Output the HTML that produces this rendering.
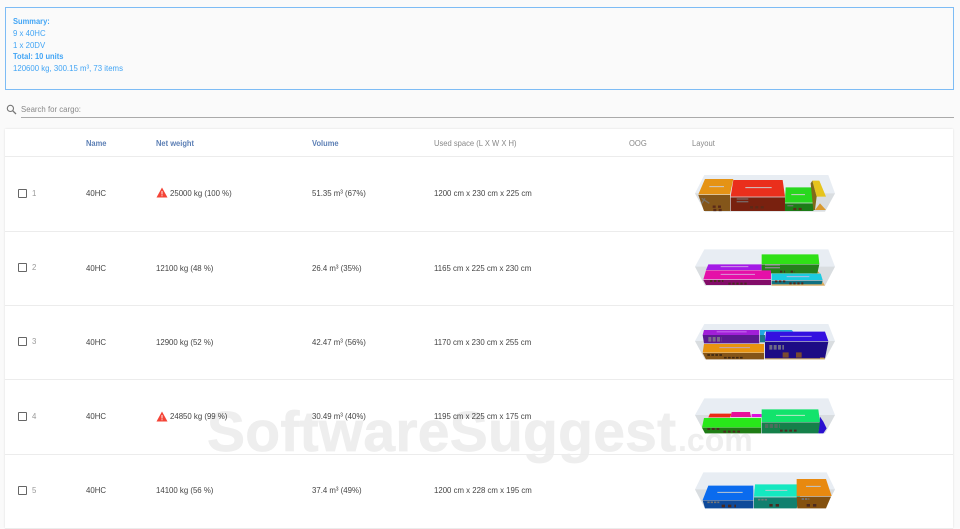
<!DOCTYPE html>
<html><head><meta charset="utf-8"><style>
html,body{margin:0;padding:0;width:960px;height:529px;overflow:hidden;background:#fafafa;font-family:"Liberation Sans",sans-serif}
.a{position:absolute;white-space:nowrap;font-size:8.6px;line-height:12px;transform:scaleX(.91);transform-origin:0 0;filter:blur(.2px);margin-left:-.4px}
.s{color:#42a5f5;left:13.5px}
.d{color:#444;margin-top:-.5px}
.h{color:#888;top:136.500px;transform:scaleX(.885)}
.b{color:#5c7fb5;font-weight:bold;transform:scaleX(.875)}
.n{color:#999;left:32px;margin-top:-.5px}
.c{position:absolute;left:18px;width:7px;height:7px;border:1.3px solid #666;border-radius:1px}
.l{position:absolute;left:5px;width:948px;height:1px;background:#ececec}
</style></head><body>
<div style="position:absolute;left:5px;top:7px;width:947px;height:81px;border:1px solid #7dbcf5;background:#fafafa"></div>
<div class="a s b" style="top:15px;color:#42a5f5">Summary:</div>
<div class="a s" style="top:26.5px">9 x 40HC</div>
<div class="a s" style="top:38.5px">1 x 20DV</div>
<div class="a s b" style="top:50px;color:#42a5f5">Total: 10 units</div>
<div class="a s" style="top:62px">120600 kg, 300.15 m³, 73 items</div>
<svg style="position:absolute;left:6px;top:104px" width="11" height="11" viewBox="0 0 11 11"><circle cx="4.4" cy="4.4" r="3.1" fill="none" stroke="#777" stroke-width="1.1"/><path d="M6.8 6.8L10 10" stroke="#777" stroke-width="1.3"/></svg>
<div class="a" style="left:21.5px;top:102.500px;color:#888">Search for cargo:</div>
<div style="position:absolute;left:21px;top:117px;width:933px;height:1px;background:#aaa"></div>
<div style="position:absolute;left:5px;top:129px;width:948px;height:399px;background:#fff;box-shadow:0 0 2px rgba(0,0,0,.12)"></div>

<div style="position:absolute;left:207px;top:398.5px;font-size:57px;line-height:66px;font-weight:bold;color:#eee;-webkit-text-stroke:.7px #eee;white-space:nowrap;filter:blur(.3px);letter-spacing:.25px">SoftwareSuggest</div>
<div style="position:absolute;left:678px;top:420px;font-size:32px;line-height:40px;font-weight:bold;color:#eee;white-space:nowrap;filter:blur(.3px)">.com</div>

<div class="l" style="top:156px"></div><div class="l" style="top:231px"></div><div class="l" style="top:305px"></div><div class="l" style="top:379px"></div><div class="l" style="top:453.500px"></div><div class="l" style="top:528px"></div>
<div class="a h b" style="left:86px">Name</div>
<div class="a h b" style="left:156.5px">Net weight</div>
<div class="a h b" style="left:312px">Volume</div>
<div class="a h" style="left:434.5px">Used space (L X W X H)</div>
<div class="a h" style="left:629px">OOG</div>
<div class="a h" style="left:692.5px">Layout</div>

<div class="c" style="top:189px"></div><div class="a n" style="top:187px">1</div>
<div class="a d" style="left:86px;top:187.5px">40HC</div><div class="a d" style="left:170px;top:187.5px">25000 kg (100 %)</div><div class="a d" style="left:312px;top:187.5px">51.35 m³ (67%)</div><div class="a d" style="left:434.5px;top:187.5px">1200 cm x 230 cm x 225 cm</div>

<div class="c" style="top:263px"></div><div class="a n" style="top:261.5px">2</div>
<div class="a d" style="left:86px;top:262px">40HC</div><div class="a d" style="left:156.5px;top:262px">12100 kg (48 %)</div><div class="a d" style="left:312px;top:262px">26.4 m³ (35%)</div><div class="a d" style="left:434.5px;top:262px">1165 cm x 225 cm x 230 cm</div>

<div class="c" style="top:337px"></div><div class="a n" style="top:335.5px">3</div>
<div class="a d" style="left:86px;top:336px">40HC</div><div class="a d" style="left:156.5px;top:336px">12900 kg (52 %)</div><div class="a d" style="left:312px;top:336px">42.47 m³ (56%)</div><div class="a d" style="left:434.5px;top:336px">1170 cm x 230 cm x 255 cm</div>

<div class="c" style="top:411.5px"></div><div class="a n" style="top:410px">4</div>
<div class="a d" style="left:86px;top:410.5px">40HC</div><div class="a d" style="left:170px;top:410.5px">24850 kg (99 %)</div><div class="a d" style="left:312px;top:410.5px">30.49 m³ (40%)</div><div class="a d" style="left:434.5px;top:410.5px">1195 cm x 225 cm x 175 cm</div>

<div class="c" style="top:486px"></div><div class="a n" style="top:484px">5</div>
<div class="a d" style="left:86px;top:484.5px">40HC</div><div class="a d" style="left:156.5px;top:484.5px">14100 kg (56 %)</div><div class="a d" style="left:312px;top:484.5px">37.4 m³ (49%)</div><div class="a d" style="left:434.5px;top:484.5px">1200 cm x 228 cm x 195 cm</div>

<svg style="position:absolute;left:0;top:0;filter:blur(.35px)" width="960" height="529">
<g fill="#f44336">
<path d="M162 187.500L167.500 197.500H156.500Z"/><path d="M162 411.500L167.500 421.500H156.500Z"/>
</g>
<path d="M162 191v3.500M162 195.300v1M162 415v3.500M162 419.300v1" stroke="#fff" stroke-width=".9"/>

<g transform="translate(680 165) scale(.3333)">
<path d="M73 30H445L465 85L435 140H75L45 85Z" fill="#e8edf3"/><path d="M45 85H465L435 140H75Z" fill="#d9dde0"/>
<path d="M75 42H160L150 88H55Z" fill="#e59315"/><path d="M55 90H150V138H72Z" fill="#84561a"/>
<path d="M160 45H308L315 95H152Z" fill="#ea2f1c"/><path d="M152 97H315V138H152Z" fill="#79210f"/>
<path d="M317 67H395L405 113H315Z" fill="#28d81e"/><path d="M315 115H405L400 138H315Z" fill="#1c7d17"/>
<path d="M397 47H418L438 95H410Z" fill="#e6c41c"/><path d="M392 55L397 47L410 95L405 135H400Z" fill="#7f6a1a"/><path d="M420 115L438 135H405Z" fill="#d99a30"/>
<path d="M88 65H132M196 68H275M334 89H375" stroke="#ccc" stroke-width="3"/>
<path d="M65 100L88 115M75 100L65 115M170 102H205M170 110H205M322 122H340" stroke="#777" stroke-width="4" opacity=".8"/>
<path d="M98 125H125M100 135H128M210 127H255M340 132H368" stroke="#5a2a18" stroke-width="7" stroke-dasharray="9 7"/>
</g>

<g transform="translate(680 165) scale(.3333)">
<path d="M73 253H445L465 305L435 362H75L45 305Z" fill="#e8edf3"/><path d="M45 305H465L435 362H75Z" fill="#d9dde0"/>
<path d="M85 298H245V315H78Z" fill="#a41ae6"/>
<path d="M405 310L420 325H395Z" fill="#e0a040"/>
<path d="M245 268H415L418 297H245Z" fill="#2fe016"/><path d="M245 298H418L412 325H245Z" fill="#25801b"/>
<path d="M78 316H273V343H70Z" fill="#e510a8"/><path d="M70 345H273V360H78Z" fill="#820c68"/>
<path d="M275 326H422L428 345H275Z" fill="#1dcbe0"/><path d="M275 347H428L425 358H275Z" fill="#107080"/>
<path d="M428 350L435 362H275V358H425Z" fill="#d9a858"/>
<path d="M122 305H205M122 328H225M320 335H388" stroke="#d8b8e8" stroke-width="3" opacity=".8"/>
<path d="M255 300H300M255 308H300" stroke="#888" stroke-width="4"/>
<path d="M300 320H315M332 320H345M90 348H130M285 349H320M145 356H200M328 355H370" stroke="#4a2a20" stroke-width="6" stroke-dasharray="7 5"/>
</g>

<g transform="translate(680 315) scale(.3333)">
<path d="M73 27H445L465 78L435 133H75L45 78Z" fill="#e8edf3"/><path d="M45 78H465L435 133H75Z" fill="#d9dde0"/>
<path d="M72 45H238V60H68Z" fill="#a11fd8"/><path d="M68 60H238V85H72Z" fill="#5a1a90"/>
<path d="M240 45H335L340 50H255L252 60H240Z" fill="#22a8e0"/><path d="M240 60H255V82H240Z" fill="#1a7a8a"/>
<path d="M258 50H435L445 78H255Z" fill="#3410e0"/><path d="M255 80H445L435 130H255Z" fill="#1d0c85"/>
<path d="M72 87H252V113H68Z" fill="#e8930f"/><path d="M68 114H252V133H78Z" fill="#855518"/>
<path d="M420 128H433L435 133H255V130H420Z" fill="#c9a050"/>
<path d="M110 50H200" stroke="#bb55e8" stroke-width="5"/><path d="M300 64H395M118 98H210" stroke="#b8a8e8" stroke-width="3" opacity=".8"/>
<path d="M85 73H125M268 97H312" stroke="#888" stroke-width="14" stroke-dasharray="9 4" opacity=".75"/>
<path d="M82 120H130M132 128H188" stroke="#2a1a10" stroke-width="5" stroke-dasharray="8 4" opacity=".75"/>
<path d="M308 120H365" stroke="#7a4a30" stroke-width="16" stroke-dasharray="18 22"/>
</g>

<g transform="translate(680 315) scale(.3333)">
<path d="M73 250H445L465 300L435 355H75L45 300Z" fill="#e8edf3"/><path d="M45 300H465L435 355H75Z" fill="#d9dde0"/>
<path d="M90 296H155L150 307H85Z" fill="#ee2a15"/><path d="M155 291H210L213 306H152Z" fill="#e8109a"/><path d="M215 297H245V306H215Z" fill="#e010e0"/>
<path d="M420 305L430 320L440 340L430 355H415Z" fill="#2a10d0"/>
<path d="M72 309H243V337H66Z" fill="#28e81a"/><path d="M66 338H243V355H75Z" fill="#1f7c14"/>
<path d="M245 283H415L420 321H245Z" fill="#12e36c"/><path d="M245 322H420L415 355H245Z" fill="#15804a"/>
<path d="M288 301H375" stroke="#bde8c8" stroke-width="3"/>
<path d="M255 333H300" stroke="#666" stroke-width="12" stroke-dasharray="10 4" opacity=".7"/>
<path d="M82 342H120M130 350H180M300 347H352" stroke="#4a2a20" stroke-width="6" stroke-dasharray="8 6"/>
</g>

<g transform="translate(680 440) scale(.3333)">
<path d="M70 97H440L465 148L435 205H75L45 148Z" fill="#e8edf3"/><path d="M45 148H465L435 205H75Z" fill="#d9dde0"/>
<path d="M85 137H220V180H68Z" fill="#0a6bee"/><path d="M68 181H220V205H75Z" fill="#0e4a9a"/>
<path d="M225 133H355L360 170H222Z" fill="#14e8c0"/><path d="M222 172H360L350 205H222Z" fill="#11806f"/>
<path d="M350 117H438L455 168H350Z" fill="#e8890f"/><path d="M350 170H453L438 205H352Z" fill="#84510f"/>
<path d="M112 157H188M256 151H322M378 139H422" stroke="#bcc8d0" stroke-width="3"/>
<path d="M82 187H118M234 179H262M365 177H388" stroke="#777" stroke-width="5" stroke-dasharray="7 3"/>
<path d="M125 198H168M268 196H305M380 196H410" stroke="#4a2a20" stroke-width="8" stroke-dasharray="10 9"/>
</g>
</svg>
</body></html>
